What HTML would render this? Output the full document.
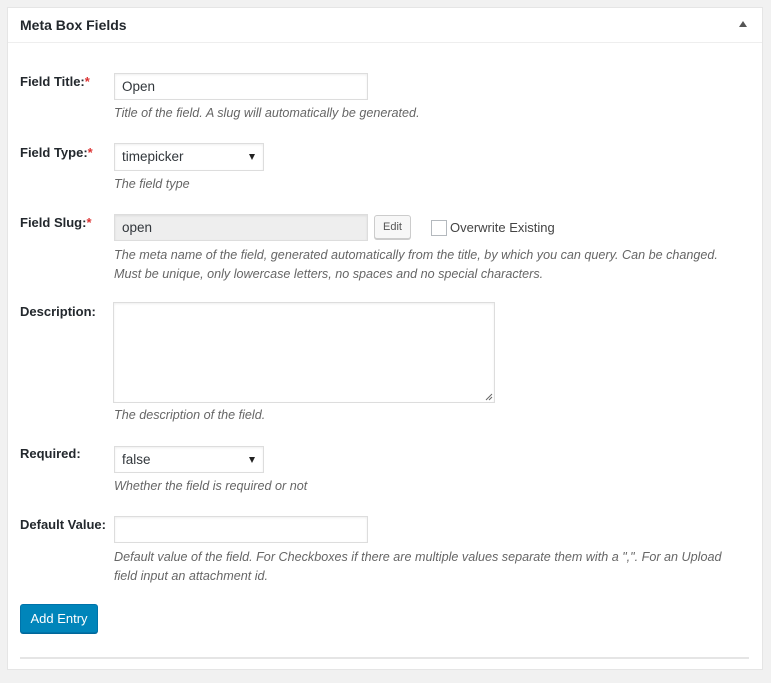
<!DOCTYPE html>
<html><head><meta charset="utf-8"><style>
body{margin:0;width:771px;height:683px;background:#f1f1f1;font-family:"Liberation Sans",sans-serif;color:#23282d;position:relative;overflow:hidden}
.box{position:absolute;left:7px;top:7px;width:756px;height:663px;background:#fff;border:1px solid #e5e5e5;box-sizing:border-box}
.a{position:absolute;white-space:nowrap}
.lbl{font-size:13px;font-weight:bold;color:#23282d}
.lbl b{color:#dc3232;font-weight:bold}
.help{font-size:12.6px;font-style:italic;color:#666}
.in{position:absolute;border:1px solid #ddd;box-shadow:inset 0 1px 2px rgba(0,0,0,.07);box-sizing:border-box;background:#fff;font-size:13.5px;color:#32373c;padding-left:7px}
.arr{position:absolute;right:8px;top:10px;width:0;height:0;border-left:3.5px solid transparent;border-right:3.5px solid transparent;border-top:6px solid #222}
</style></head><body>
<div class="box"></div>
<div class="a" style="left:20px;top:17px;font-size:14px;font-weight:bold;color:#23282d">Meta Box Fields</div>
<div class="a" style="left:739px;top:21px;width:0;height:0;border-left:4px solid transparent;border-right:4px solid transparent;border-bottom:6px solid #555"></div>
<div class="a" style="left:8px;top:42px;width:754px;height:1px;background:#eee"></div>

<div class="a lbl" style="left:20px;top:74px">Field Title:<b>*</b></div>
<div class="in" style="left:114px;top:73px;width:254px;height:27px;line-height:25px">Open</div>
<div class="a help" style="left:114px;top:106px">Title of the field. A slug will automatically be generated.</div>

<div class="a lbl" style="left:20px;top:145px">Field Type:<b>*</b></div>
<div class="in" style="left:114px;top:143px;width:150px;height:28px;line-height:26px">timepicker<span class="arr"></span></div>
<div class="a help" style="left:114px;top:177px">The field type</div>

<div class="a lbl" style="left:20px;top:215px">Field Slug:<b>*</b></div>
<div class="in" style="left:114px;top:214px;width:254px;height:27px;line-height:25px;background:#eee">open</div>
<div class="a" style="left:374px;top:215px;width:37px;height:24px;border:1px solid #ccc;border-radius:3px;background:#f7f7f7;box-sizing:border-box;box-shadow:0 1px 0 #ccc;font-size:11px;color:#555;text-align:center;line-height:22px">Edit</div>
<div class="a" style="left:431px;top:220px;width:16px;height:16px;border:1px solid #b4b9be;box-sizing:border-box;background:#fff"></div>
<div class="a" style="left:450px;top:220px;font-size:13px;color:#444">Overwrite Existing</div>
<div class="a help" style="left:114px;top:246px;line-height:19px">The meta name of the field, generated automatically from the title, by which you can query. Can be changed.<br>Must be unique, only lowercase letters, no spaces and no special characters.</div>

<div class="a lbl" style="left:20px;top:304px">Description:</div>
<div class="in" style="left:113px;top:302px;width:382px;height:101px"><svg style="position:absolute;right:1px;bottom:1px" width="8" height="8"><path d="M1 7L7 1M4 7L7 4" stroke="#666" stroke-width="1"/></svg></div>
<div class="a help" style="left:114px;top:408px">The description of the field.</div>

<div class="a lbl" style="left:20px;top:446px">Required:</div>
<div class="in" style="left:114px;top:446px;width:150px;height:27px;line-height:25px">false<span class="arr"></span></div>
<div class="a help" style="left:114px;top:479px">Whether the field is required or not</div>

<div class="a lbl" style="left:20px;top:517px">Default Value:</div>
<div class="in" style="left:114px;top:516px;width:254px;height:27px"></div>
<div class="a help" style="left:114px;top:548px;line-height:19px">Default value of the field. For Checkboxes if there are multiple values separate them with a ",". For an Upload<br>field input an attachment id.</div>

<div class="a" style="left:20px;top:604px;width:78px;height:29px;background:#0085ba;border:1px solid #0073aa;border-radius:3px;box-sizing:border-box;box-shadow:0 1px 0 #006799;color:#fff;font-size:13px;text-align:center;line-height:27px">Add Entry</div>
<div class="a" style="left:20px;top:657px;width:729px;height:2px;background:#e5e5e5"></div>
</body></html>
